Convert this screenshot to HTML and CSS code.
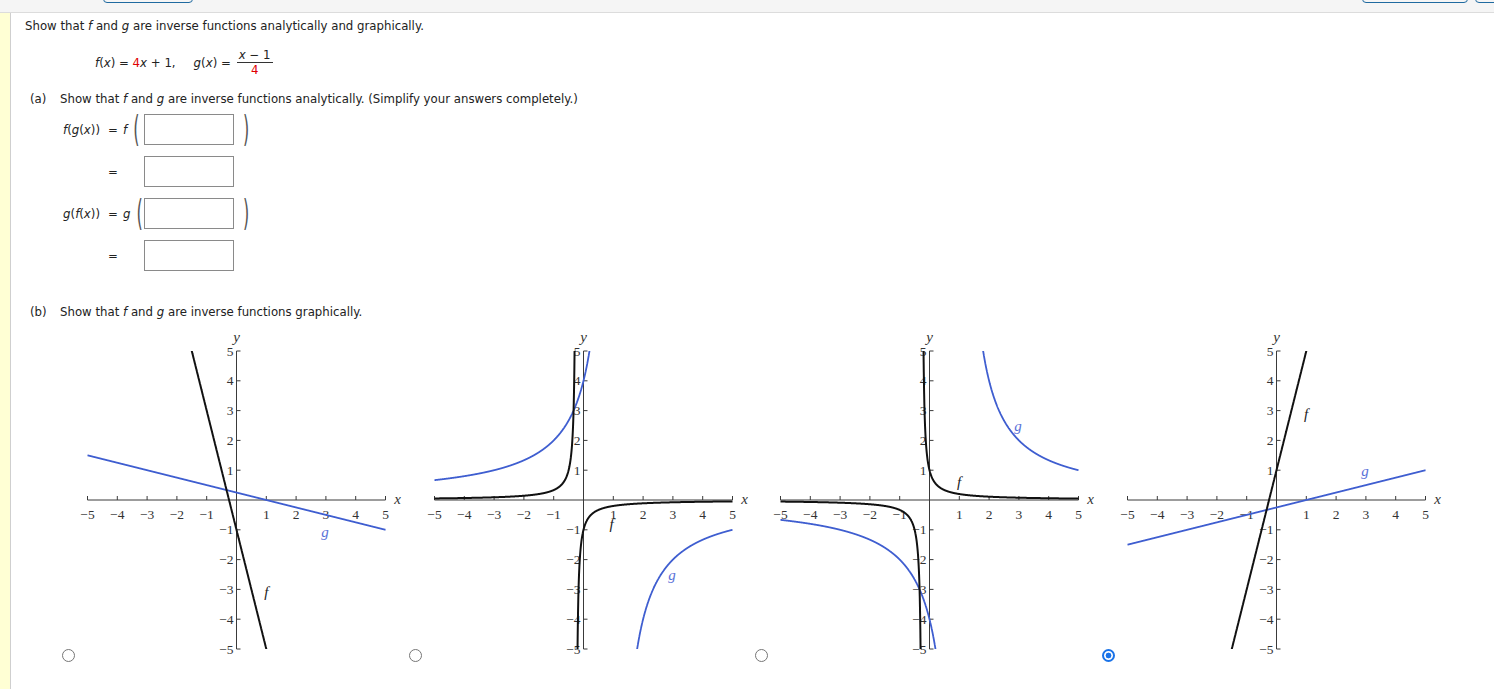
FILE: index.html
```html
<!DOCTYPE html>
<html lang="en">
<head>
<meta charset="utf-8">
<title>Inverse functions</title>
<link rel="stylesheet" href="styles.css">
</head>
<body>
<div class="topbar">
  <span class="tb-btn b1"></span>
  <span class="tb-btn b2"></span>
  <span class="tb-btn b3"></span>
</div>
<div class="main">
  <div class="strip"></div>
  <div class="content">
    <p class="prompt">Show that <i>f</i> and <i>g</i> are inverse functions analytically and graphically.</p>
    <div class="defs">
      <span class="def"><i>f</i>(<i>x</i>) = <span class="red">4</span><i>x</i> + 1,</span>
      <span class="def def-g"><i>g</i>(<i>x</i>) =</span>
      <span class="frac"><span class="num"><i>x</i> − 1</span><span class="den red">4</span></span>
    </div>
    <div class="part part-a"><span class="tag">(a)</span><span>Show that <i>f</i> and <i>g</i> are inverse functions analytically. (Simplify your answers completely.)</span></div>
    <div class="work">
      <div class="row"><span class="lhs"><i>f</i>(<i>g</i>(<i>x</i>))</span><span class="eq">=</span><span class="fn"><i>f</i><span class="paren">(</span></span><span class="box"></span><span class="paren close">)</span></div>
      <div class="row"><span class="lhs"></span><span class="eq">=</span><span class="fn"></span><span class="box"></span></div>
      <div class="row"><span class="lhs"><i>g</i>(<i>f</i>(<i>x</i>))</span><span class="eq">=</span><span class="fn"><i>g</i><span class="paren">(</span></span><span class="box"></span><span class="paren close">)</span></div>
      <div class="row"><span class="lhs"></span><span class="eq">=</span><span class="fn"></span><span class="box"></span></div>
    </div>
    <div class="part part-b"><span class="tag">(b)</span><span>Show that <i>f</i> and <i>g</i> are inverse functions graphically.</span></div>
    <div class="graphs">
      <label class="option"><input class="radio" type="radio" name="choice"><svg class="graph" data-graph="0" width="330" height="335"></svg></label>
      <label class="option"><input class="radio" type="radio" name="choice"><svg class="graph" data-graph="1" width="330" height="335"></svg></label>
      <label class="option"><input class="radio" type="radio" name="choice"><svg class="graph" data-graph="2" width="330" height="335"></svg></label>
      <label class="option"><input class="radio" type="radio" name="choice" checked><svg class="graph" data-graph="3" width="330" height="335"></svg></label>
    </div>
  </div>
</div>
<script src="script.js"></script>
</body>
</html>
```
FILE: styles.css
```css
html, body { margin: 0; padding: 0; background: #fff; }
body {
  font-family: "DejaVu Sans", Verdana, sans-serif;
  font-size: 11.75px;
  color: #222;
  overflow: hidden;
}
i { font-style: italic; }

.topbar {
  height: 12px;
  background: #f5f5f5;
  border-bottom: 1px solid #dcdcdc;
  display: flex;
  overflow: hidden;
}
.tb-btn {
  flex: none;
  box-sizing: border-box;
  height: 20px;
  margin-top: -17px;
  border: 1px solid #1f6aa0;
  border-radius: 4px;
}
.tb-btn.b1 { margin-left: 103px; width: 90px; }
.tb-btn.b2 { margin-left: auto; width: 106px; }
.tb-btn.b3 { margin-left: 7px; width: 30px; margin-right: -11px; }

.main { display: flex; min-height: 676px; }
.strip {
  flex: none;
  width: 10px;
  background: #ffffd4;
  border-right: 1px solid #cfcfcf;
}
.content { flex: 1; padding-left: 14px; }

.prompt { margin: 5px 0 0; line-height: 16px; }

.defs {
  display: flex;
  align-items: center;
  height: 29px;
  margin: 14px 0 0 70px;
}
.def-g { margin-left: 18px; }
.frac {
  display: inline-flex;
  flex-direction: column;
  align-items: center;
  margin-left: 6px;
}
.num { line-height: 14px; padding: 0 2px; border-bottom: 1px solid #333; }
.den { line-height: 14px; }
.red { color: #e00000; }

.part { display: flex; line-height: 16px; }
.part-a { margin-top: 14px; }
.part-b { margin-top: 33px; }
.tag { width: 30px; margin-left: 5px; flex: none; }

.work { margin-top: 7px; }
.row { display: flex; align-items: center; height: 31px; }
.row + .row { margin-top: 11px; }
.lhs { width: 75px; text-align: right; flex: none; }
.eq { width: 20px; padding-left: 8px; box-sizing: border-box; flex: none; }
.fn { width: 24px; display: flex; align-items: center; padding-left: 3px; box-sizing: border-box; flex: none; }
.fn .paren { margin-left: 6px; }
.box {
  flex: none;
  width: 90px;
  height: 31px;
  box-sizing: border-box;
  border: 1px solid #8a8a8a;
  background: #fff;
}
.paren {
  display: inline-block;
  font-size: 16px;
  line-height: 16px;
  transform: scaleY(2.2);
  color: #555;
}
.paren.close { margin-left: 9px; }

.graphs {
  display: grid;
  grid-template-columns: repeat(4, 346.5px);
  margin: 10px 0 0 35px;
}
.option { display: flex; align-items: flex-end; }
.radio {
  appearance: none;
  -webkit-appearance: none;
  flex: none;
  width: 13px;
  height: 13px;
  margin: 0 0 3px 2px;
  box-sizing: border-box;
  border: 1px solid #767676;
  border-radius: 50%;
  background: #fff;
}
.radio:checked {
  border: 2px solid #1a73e8;
  background: radial-gradient(circle, #1a73e8 0 2.6px, #fff 3.2px);
}
.graph { display: block; margin-left: 2px; overflow: visible; }
.graph .axis { stroke: #3a3a3a; stroke-width: 1; fill: none; }
.graph .tick-label { font-family: "Liberation Serif", "DejaVu Serif", serif; font-size: 13.5px; fill: #333; }
.graph .axis-label { font-family: "Liberation Serif", serif; font-style: italic; font-size: 15px; fill: #333; }
.graph .curve-f { stroke: #111; stroke-width: 2; fill: none; }
.graph .curve-g { stroke: #3f5ed0; stroke-width: 1.8; fill: none; }
.graph .label-f { font-family: "Liberation Serif", serif; font-style: italic; font-size: 15px; fill: #222; }
.graph .label-g { font-family: "Liberation Serif", serif; font-style: italic; font-size: 15px; fill: #5a72d8; }
```
FILE: script.js
```js
(function () {
  var NS = 'http://www.w3.org/2000/svg';
  var U = 29.8, OX = 159.5, OY = 170;
  function px(x) { return OX + x * U; }
  function py(y) { return OY - y * U; }

  var GRAPHS = [
    { f: function (x) { return -4 * x - 1; }, g: function (x) { return -x / 4 + 0.25; }, fl: [1.0, -3.1], gl: [2.97, -1.15] },
    { f: function (x) { return -1 / (4 * x + 1); }, g: function (x) { return 4 / (1 - x); }, fl: [0.94, -0.8], gl: [2.97, -2.6] },
    { f: function (x) { return 1 / (4 * x + 1); }, g: function (x) { return 4 / (x - 1); }, fl: [0.99, 0.6], gl: [2.97, 2.4] },
    { f: function (x) { return 4 * x + 1; }, g: function (x) { return (x - 1) / 4; }, fl: [0.99, 2.9], gl: [2.97, 0.9] }
  ];

  function el(name, attrs, text) {
    var e = document.createElementNS(NS, name);
    for (var k in attrs) e.setAttribute(k, attrs[k]);
    if (text !== undefined) e.textContent = text;
    return e;
  }

  function curvePath(fn) {
    var d = '', pen = false;
    for (var i = 0; i <= 5000; i++) {
      var x = -5 + i * 0.002;
      var y = fn(x);
      if (!isFinite(y) || Math.abs(y) > 6) { pen = false; continue; }
      d += (pen ? 'L' : 'M') + px(x).toFixed(2) + ',' + py(y).toFixed(2);
      pen = true;
    }
    return d;
  }

  var svgs = document.querySelectorAll('svg.graph');
  svgs.forEach(function (svg) {
    var idx = +svg.getAttribute('data-graph');
    var G = GRAPHS[idx];
    var clipId = 'clip' + idx;
    var defs = el('defs', {});
    var cp = el('clipPath', { id: clipId });
    cp.appendChild(el('rect', { x: px(-5) - 1, y: py(5), width: 10 * U + 2, height: 10 * U }));
    defs.appendChild(cp);
    svg.appendChild(defs);

    svg.appendChild(el('line', { 'class': 'axis', x1: px(-5), y1: OY, x2: px(5), y2: OY }));
    svg.appendChild(el('line', { 'class': 'axis', x1: OX, y1: py(5), x2: OX, y2: py(-5) }));
    for (var i = -5; i <= 5; i++) {
      if (i === 0) continue;
      svg.appendChild(el('line', { 'class': 'axis', x1: px(i), y1: OY, x2: px(i), y2: OY - 4 }));
      svg.appendChild(el('line', { 'class': 'axis', x1: OX, y1: py(i), x2: OX + 4, y2: py(i) }));
      var t = i < 0 ? '\u2212' + (-i) : String(i);
      svg.appendChild(el('text', { 'class': 'tick-label', x: px(i), y: OY + 19, 'text-anchor': 'middle' }, t));
      svg.appendChild(el('text', { 'class': 'tick-label', x: OX - 3, y: py(i) + 4.5, 'text-anchor': 'end' }, t));
    }
    svg.appendChild(el('text', { 'class': 'axis-label', x: OX, y: py(5) - 9, 'text-anchor': 'middle' }, 'y'));
    svg.appendChild(el('text', { 'class': 'axis-label', x: px(5) + 12, y: OY + 4, 'text-anchor': 'middle' }, 'x'));

    var grp = el('g', { 'clip-path': 'url(#' + clipId + ')' });
    grp.appendChild(el('path', { 'class': 'curve-g', d: curvePath(G.g) }));
    grp.appendChild(el('path', { 'class': 'curve-f', d: curvePath(G.f) }));
    svg.appendChild(grp);

    svg.appendChild(el('text', { 'class': 'label-f', x: px(G.fl[0]), y: py(G.fl[1]) + 5, 'text-anchor': 'middle' }, 'f'));
    svg.appendChild(el('text', { 'class': 'label-g', x: px(G.gl[0]), y: py(G.gl[1]) + 3, 'text-anchor': 'middle' }, 'g'));
  });
})();
```
